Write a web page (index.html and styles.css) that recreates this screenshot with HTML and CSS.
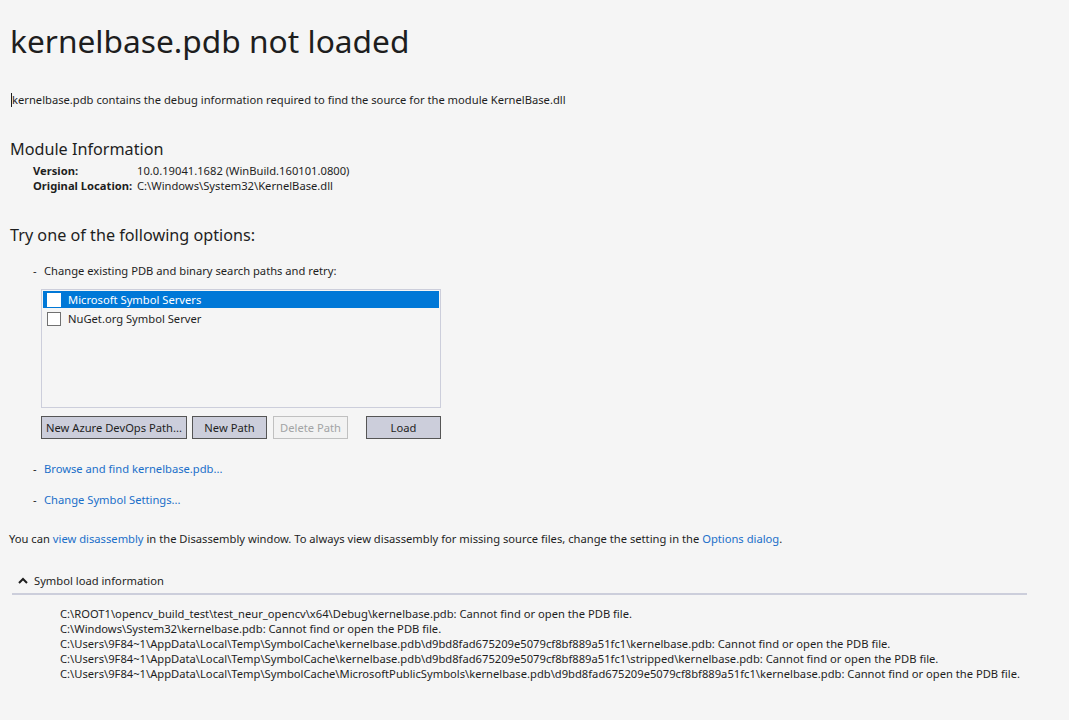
FILE: index.html
```html
<!DOCTYPE html>
<html lang="en">
<head>
    <meta charset="UTF-8">
    <title>kernelbase.pdb not loaded</title>
    <link rel="stylesheet" href="styles.css">
</head>
<body>
    <div class="page">
        <h1 class="title">kernelbase.pdb not loaded</h1>
        <p class="desc"><span class="caret"></span>kernelbase.pdb contains the debug information required to find the source for the module KernelBase.dll</p>

        <h2 class="section">Module Information</h2>
        <div class="info">
            <div class="info-row"><span class="label">Version:</span><span>10.0.19041.1682 (WinBuild.160101.0800)</span></div>
            <div class="info-row"><span class="label">Original Location:</span><span>C:\Windows\System32\KernelBase.dll</span></div>
        </div>

        <h2 class="section options-title">Try one of the following options:</h2>
        <div class="option"><span class="dash">-</span>Change existing PDB and binary search paths and retry:</div>

        <div class="paths">
            <div class="pathlist">
                <div class="path selected"><span class="check"></span>Microsoft Symbol Servers</div>
                <div class="path"><span class="check"></span>NuGet.org Symbol Server</div>
            </div>
            <div class="buttons">
                <button class="btn btn-azure">New Azure DevOps Path...</button>
                <button class="btn btn-new">New Path</button>
                <button class="btn btn-delete" disabled>Delete Path</button>
                <button class="btn btn-load">Load</button>
            </div>
        </div>

        <div class="option link-option"><span class="dash">-</span><a href="#">Browse and find kernelbase.pdb...</a></div>
        <div class="option link-option second"><span class="dash">-</span><a href="#">Change Symbol Settings...</a></div>

        <p class="note">You can <a href="#">view disassembly</a> in the Disassembly window. To always view disassembly for missing source files, change the setting in the <a href="#">Options dialog</a>.</p>

        <div class="expander">
            <svg class="chevron" width="10" height="8" viewBox="0 0 10 8"><path d="M1 6 L5 2 L9 6" fill="none" stroke="#1e1e1e" stroke-width="2"/></svg>
            <span>Symbol load information</span>
        </div>
        <div class="log">
            <div>C:\ROOT1\opencv_build_test\test_neur_opencv\x64\Debug\kernelbase.pdb: Cannot find or open the PDB file.</div>
            <div>C:\Windows\System32\kernelbase.pdb: Cannot find or open the PDB file.</div>
            <div>C:\Users\9F84~1\AppData\Local\Temp\SymbolCache\kernelbase.pdb\d9bd8fad675209e5079cf8bf889a51fc1\kernelbase.pdb: Cannot find or open the PDB file.</div>
            <div>C:\Users\9F84~1\AppData\Local\Temp\SymbolCache\kernelbase.pdb\d9bd8fad675209e5079cf8bf889a51fc1\stripped\kernelbase.pdb: Cannot find or open the PDB file.</div>
            <div>C:\Users\9F84~1\AppData\Local\Temp\SymbolCache\MicrosoftPublicSymbols\kernelbase.pdb\d9bd8fad675209e5079cf8bf889a51fc1\kernelbase.pdb: Cannot find or open the PDB file.</div>
        </div>
    </div>
</body>
</html>
```

FILE: styles.css
```css
html, body { margin: 0; padding: 0; background: #f5f5f5; }
body { font-family: "Segoe UI", "Noto Sans", sans-serif; font-size: 11.2px; color: #1e1e1e; }
.page { padding: 0 0 0 10px; width: 1017px; }
a { color: #1a6fc9; text-decoration: none; }

.title { font-size: 31.7px; font-weight: 400; margin: 0; padding-top: 20px; line-height: 42px; }
.desc { margin: 30px 0 0 1px; line-height: 16px; }
.caret { display: inline-block; width: 1px; height: 14px; background: #1e1e1e; vertical-align: -3px; }

.section { font-size: 16.2px; font-weight: 400; margin: 29px 0 0; line-height: 24px; }
.info { padding-left: 23px; margin-top: 2px; }
.info-row { display: flex; line-height: 15px; white-space: nowrap; }
.label { font-weight: bold; width: 104px; flex: none; }

.options-title { margin-top: 30px; }
.option { margin-top: 16px; padding-left: 23px; line-height: 16px; display: flex; }
.dash { width: 11px; }

.paths { margin: 10px 0 0 31px; width: 400px; }
.pathlist { height: 115px; border: 1px solid #cccedb; background: #f5f5f5; padding: 1px; }
.path { height: 17px; display: flex; align-items: center; padding-left: 4px; margin-bottom: 2px; }
.path.selected { background: #0078d7; color: #fff; }
.check { width: 12px; height: 12px; border: 1px solid #717171; background: #fff; margin-right: 7px; }
.selected .check { border-color: #fff; }

.buttons { display: flex; margin-top: 8px; }
.btn { font: inherit; height: 23px; border: 1px solid #555; background: #cccedb; color: #1e1e1e; padding: 0; white-space: nowrap; }
.btn-azure { width: 146px; }
.btn-new { width: 75px; margin-left: 5px; }
.btn-delete { width: 75px; margin-left: 6px; border-color: #c0c0c0; background: #f2f2f2; color: #a2a4a5; }
.btn-load { width: 75px; margin-left: auto; }

.link-option { margin-top: 22px; }
.link-option.second { margin-top: 15px; }

.note { margin: 23px 0 0 -1px; line-height: 16px; }

.expander { margin-top: 26px; padding-left: 8px; display: flex; align-items: center; line-height: 16px; }
.chevron { margin-right: 6px; }
.log { border-top: 2px solid #cccedb; margin: 4px 0 0 2px; padding: 11px 0 0 48px; line-height: 15px; white-space: nowrap; }
```
